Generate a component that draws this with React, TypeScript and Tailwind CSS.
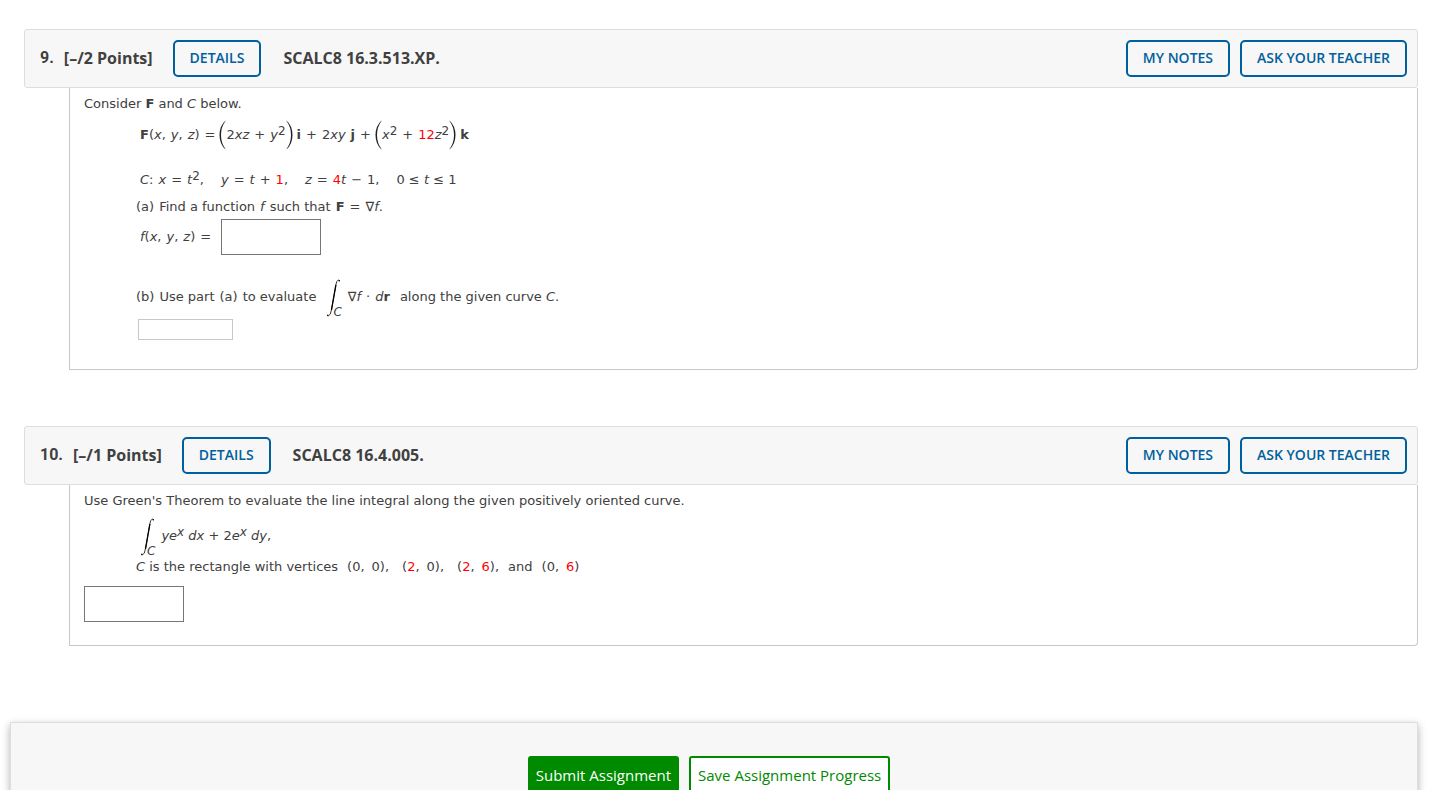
import React, {ReactNode} from "react";

type ChildrenProps = {
  children: ReactNode;
}

type QuestionProps = ChildrenProps & {
  number: number;
  points: number;
  code: string;
}

function OutlineButton({children}: ChildrenProps) {
  return (
    <button
      type="button"
      className="h-[37px] shrink-0 rounded-[5px] border-2 border-[#00609c] px-[15px] pb-px text-sm font-semibold text-[#00609c]"
    >
      {children}
    </button>
  )
}

function Question({number, points, code, children}: QuestionProps) {
  return (
    <section>
      <header className="flex h-[59px] items-center rounded-[3px] border border-[#dddddd] bg-[#f7f7f7] pl-[15px] pr-2.5 text-base font-bold text-[#404040]">
        <span className="mr-2.5 pb-0.5 font-['Roboto',sans-serif]">{number}.</span>
        <span className="mr-5 pb-px">[–/{points} Points]</span>
        <OutlineButton>DETAILS</OutlineButton>
        <h2 className="ml-[22px] pb-px">{code}</h2>
        <div className="ml-auto flex gap-2.5">
          <OutlineButton>MY NOTES</OutlineButton>
          <OutlineButton>ASK YOUR TEACHER</OutlineButton>
        </div>
      </header>
      <div className="ml-[45px] rounded-br-[4px] border border-t-0 border-[#c8c8c8] pl-3.5 pt-1.5 font-['DejaVu_Sans',Verdana,sans-serif] text-[13px] leading-5 text-[#404040]">
        {children}
      </div>
    </section>
  )
}

// One line of math, each child is a spaced token
function Expr({children}: ChildrenProps) {
  return <span className="inline-flex items-baseline gap-[5px]">{children}</span>
}

// Randomized values are shown in red
function Value({children}: ChildrenProps) {
  return <span className="text-[#ff0000]">{children}</span>
}

function Sup({children}: ChildrenProps) {
  return <sup className="-top-1 text-[12px] leading-none">{children}</sup>
}

function Point({x, y, last}: {x: ReactNode, y: ReactNode, last?: boolean}) {
  return (
    <span className="inline-flex gap-[7px]">
      <span>({x},</span>
      <span>{y}){last ? "" : ","}</span>
    </span>
  )
}

function Paren({right}: {right?: boolean}) {
  return (
    <svg width="7" height="30" viewBox="0 0 7 30" fill="#202020" className="shrink-0">
      <path d={right ? "M0.5 0.5Q6.5 6 6.5 15T0.5 29.5L0.5 29Q5 23 5 15T0.5 1Z" : "M6.5 0.5Q0.5 6 0.5 15T6.5 29.5L6.5 29Q2 23 2 15T6.5 1Z"} />
    </svg>
  )
}

function Integral() {
  return (
    <span className="flex h-10 items-end">
      <svg width="15" height="38" viewBox="0 0 15 38" fill="none" stroke="#000000" className="-mr-2 shrink-0">
        <path d="M14 1.8Q13 0.8 12 1.2Q10.5 1.8 9.8 6L5.4 31Q4.5 36.5 2.6 36.7H1" strokeWidth="0.8" />
        <path d="M9.9 6L5.5 31" strokeWidth="1.3" />
        <circle cx="13.3" cy="1.9" r="0.6" fill="#000000" stroke="none" />
        <circle cx="1.8" cy="36.3" r="0.7" fill="#000000" stroke="none" />
      </svg>
      <i className="text-[12px] leading-[10px]">C</i>
    </span>
  )
}

export default function App() {
  return (
    <div className="min-h-screen bg-white pl-2.5 pr-3 pt-[29px] font-['Open_Sans',sans-serif]">
      <main className="flex flex-col gap-14 pl-3.5">
        <Question number={9} points={2} code="SCALC8 16.3.513.XP.">
          <p>Consider <b>F</b> and <i>C</i> below.</p>
          <div className="pb-[29px] pl-[52px]">
            <div className="mt-px flex h-10 items-center gap-1 pl-1">
              <Expr>
                <span><b>F</b>(<i>x</i>,</span>
                <span><i>y</i>,</span>
                <span><i>z</i>)</span>
                <span>=</span>
              </Expr>
              <span className="flex items-center">
                <Paren />
                <Expr>
                  <span>2<i>xz</i></span>
                  <span>+</span>
                  <span><i>y</i><Sup>2</Sup></span>
                </Expr>
                <Paren right />
              </span>
              <Expr>
                <b>i</b>
                <span>+</span>
                <span>2<i>xy</i></span>
                <b>j</b>
                <span>+</span>
              </Expr>
              <span className="flex items-center">
                <Paren />
                <Expr>
                  <span><i>x</i><Sup>2</Sup></span>
                  <span>+</span>
                  <span><Value>12</Value><i>z</i><Sup>2</Sup></span>
                </Expr>
                <Paren right />
              </span>
              <b>k</b>
            </div>
            <div className="mt-[15px] flex h-5 items-baseline gap-[17px] pl-1">
              <Expr>
                <span><i>C</i>:</span>
                <i>x</i>
                <span>=</span>
                <span><i>t</i><Sup>2</Sup>,</span>
              </Expr>
              <Expr>
                <i>y</i>
                <span>=</span>
                <i>t</i>
                <span>+</span>
                <span><Value>1</Value>,</span>
              </Expr>
              <Expr>
                <i>z</i>
                <span>=</span>
                <span><Value>4</Value><i>t</i></span>
                <span>−</span>
                <span>1,</span>
              </Expr>
              <span>0 ≤ <i>t</i> ≤ 1</span>
            </div>
            <p className="mt-[7px] flex items-baseline gap-[5px]">
              <span>(a)</span>
              <span>Find a function</span>
              <i>f</i>
              <span>such that</span>
              <b>F</b>
              <span>=</span>
              <span>∇<i>f</i>.</span>
            </p>
            <div className="mt-0.5 flex items-center gap-2.5 pl-1">
              <label htmlFor="potential">
                <Expr>
                  <span><i>f</i>(<i>x</i>,</span>
                  <span><i>y</i>,</span>
                  <span><i>z</i>)</span>
                  <span>=</span>
                </Expr>
              </label>
              <input id="potential" type="text" className="h-9 w-[100px] border border-[#767676] bg-white px-2" />
            </div>
            <label htmlFor="work" className="mt-[22px] flex h-10 items-center gap-2.5">
              <Expr>
                <span>(b)</span>
                <span>Use part</span>
                <span>(a)</span>
                <span>to evaluate</span>
              </Expr>
              <span className="flex items-center gap-1.5">
                <Integral />
                <Expr>
                  <span>∇<i>f</i></span>
                  <span>·</span>
                  <span><i>d</i><b>r</b></span>
                </Expr>
              </span>
              <span>along the given curve <i>C</i>.</span>
            </label>
            <input id="work" type="text" className="ml-0.5 mt-0.5 block h-[21px] w-[95px] border border-[#c8c8c8] bg-white px-1" />
          </div>
        </Question>

        <Question number={10} points={1} code="SCALC8 16.4.005.">
          <label htmlFor="green" className="block">
            Use Green's Theorem to evaluate the line integral along the given positively oriented curve.
          </label>
          <div className="pl-[52px]">
            <div className="mt-[5px] flex h-10 items-center gap-1.5 pl-1">
              <Integral />
              <span><i>ye</i><Sup><i>x</i></Sup> <i>dx</i> + 2<i>e</i><Sup><i>x</i></Sup> <i>dy</i>,</span>
            </div>
            <p className="mt-px flex gap-[9px]">
              <span><i>C</i> is the rectangle with vertices</span>
              <span className="flex gap-[13px]">
                <Point x="0" y="0" />
                <Point x={<Value>2</Value>} y="0" />
                <Point x={<Value>2</Value>} y={<Value>6</Value>} />
              </span>
              <span>and</span>
              <Point x="0" y={<Value>6</Value>} last />
            </p>
          </div>
          <input id="green" type="text" className="mb-[23px] mt-[9px] block h-9 w-[100px] border border-[#767676] bg-white px-2" />
        </Question>
      </main>

      <footer className="mt-[76px] flex justify-center gap-2.5 border border-[#dddddd] bg-[#f7f7f7] pb-8 pr-2.5 pt-[33px] shadow-[0_3px_8px_rgba(0,0,0,0.3)]">
        <button type="submit" className="h-10 rounded-[3px] bg-[#008a00] px-2 pb-0.5 text-[15px] font-medium text-white">
          Submit Assignment
        </button>
        <button type="button" className="h-10 rounded-[3px] border-2 border-[#008a00] bg-white px-[7px] pb-0.5 text-[15px] font-medium text-[#008a00]">
          Save Assignment Progress
        </button>
      </footer>
    </div>
  )
}
